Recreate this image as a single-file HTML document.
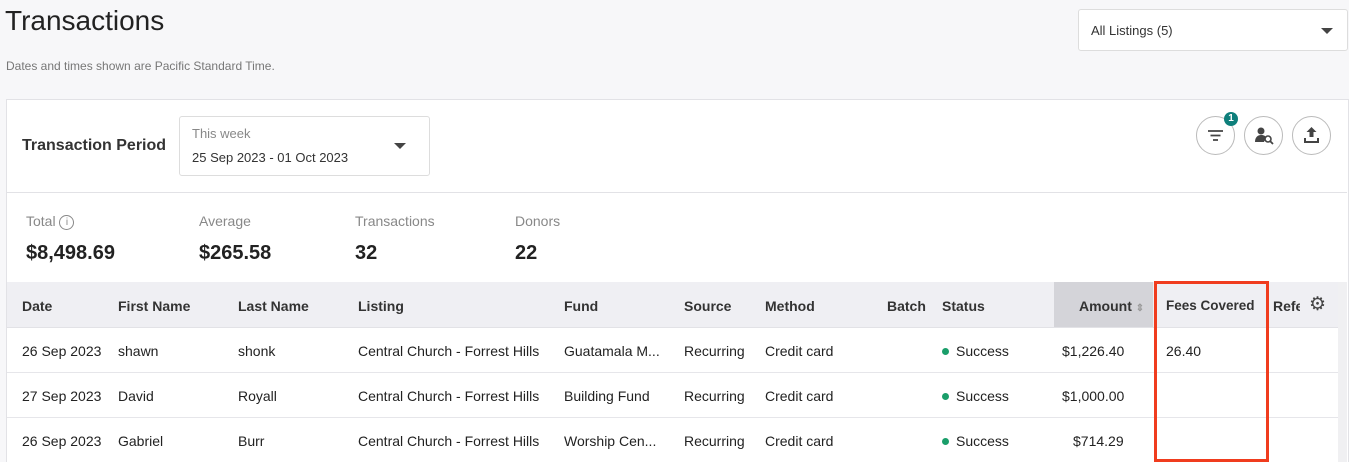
<!DOCTYPE html>
<html><head><style>
html,body{margin:0;width:1349px;height:462px;overflow:hidden}
body{background:#f7f7f9;font-family:"Liberation Sans",sans-serif;color:#222;position:relative}
.a{position:absolute;white-space:nowrap}
.card{position:absolute;left:6px;top:99px;width:1341px;height:370px;background:#fff;border:1px solid #e2e2e6}
.th{font-size:14px;font-weight:bold;color:#333;top:298px}
.td{font-size:14px;color:#222}
.ic{position:absolute;width:37px;height:37px;border:1px solid #bbb;border-radius:50%;background:#fff;top:116px}
.dot{display:inline-block;width:7px;height:7px;border-radius:50%;background:#1a9e6a;margin-right:7px;vertical-align:1px}
</style></head><body>
<div class="a" style="left:5px;top:5px;font-size:28px;color:#222">Transactions</div>
<div class="a" style="left:6px;top:59px;font-size:12px;color:#777">Dates and times shown are Pacific Standard Time.</div>
<div class="a" style="left:1078px;top:9px;width:268px;height:40px;background:#fff;border:1px solid #ddd;border-radius:3px"></div>
<div class="a" style="left:1091px;top:23px;font-size:13px;color:#333">All Listings (5)</div>
<div class="a" style="left:1321px;top:28px;width:0;height:0;border-left:6px solid transparent;border-right:6px solid transparent;border-top:6px solid #444"></div>
<div class="card"></div>
<div class="a" style="left:22px;top:137px;font-size:16px;font-weight:bold;color:#333">Transaction Period</div>
<div class="a" style="left:179px;top:116px;width:249px;height:58px;border:1px solid #ddd;border-radius:3px;background:#fff"></div>
<div class="a" style="left:192px;top:126px;font-size:13px;color:#888">This week</div>
<div class="a" style="left:192px;top:150px;font-size:13px;color:#333">25 Sep 2023 - 01 Oct 2023</div>
<div class="a" style="left:394px;top:143px;width:0;height:0;border-left:6px solid transparent;border-right:6px solid transparent;border-top:6px solid #444"></div>
<div class="ic" style="left:1196px"><svg width="37" height="37"><path d="M11 14h15M13.5 18.5h10M16 23h5" stroke="#444" stroke-width="1.8"/></svg></div>
<div class="a" style="left:1224px;top:112px;width:14px;height:14px;border-radius:50%;background:#0e7f7b;color:#fff;font-size:10px;font-weight:bold;text-align:center;line-height:14px">1</div>
<div class="ic" style="left:1244px"><svg width="37" height="37"><circle cx="16" cy="14" r="3.5" fill="#444"/><path d="M10 25c0-5 3-7 6-7s4 1 5 2l-2 5z" fill="#444"/><circle cx="23" cy="22" r="3" fill="none" stroke="#444" stroke-width="1.6"/><path d="M25 24l3 3" stroke="#444" stroke-width="1.8"/></svg></div>
<div class="ic" style="left:1292px"><svg width="37" height="37"><path d="M18.5 10l-5 5h3v5h4v-5h3z" fill="#444"/><path d="M12 21v4h13v-4" fill="none" stroke="#444" stroke-width="2"/></svg></div>
<div class="a" style="left:7px;top:192px;width:1340px;height:1px;background:#e2e2e6"></div>
<div class="a" style="left:26px;top:213px;font-size:14px;color:#888">Total <span style="display:inline-block;width:13px;height:13px;border:1px solid #888;border-radius:50%;font-size:10px;text-align:center;line-height:13px;vertical-align:1px">i</span></div>
<div class="a" style="left:199px;top:213px;font-size:14px;color:#888">Average</div>
<div class="a" style="left:355px;top:213px;font-size:14px;color:#888">Transactions</div>
<div class="a" style="left:515px;top:213px;font-size:14px;color:#888">Donors</div>
<div class="a" style="left:26px;top:242px;font-size:20px;font-weight:bold;color:#222">$8,498.69</div>
<div class="a" style="left:199px;top:242px;font-size:20px;font-weight:bold;color:#222">$265.58</div>
<div class="a" style="left:355px;top:242px;font-size:20px;font-weight:bold;color:#222">32</div>
<div class="a" style="left:515px;top:242px;font-size:20px;font-weight:bold;color:#222">22</div>
<div class="a" style="left:7px;top:282px;width:1340px;height:45px;background:#efeff3;border-bottom:1px solid #e2e2e6"></div>
<div class="a" style="left:1054px;top:282px;width:99px;height:45px;background:#d4d4d9"></div>
<div class="a" style="left:1338px;top:282px;width:9px;height:180px;background:#f0f0f2"></div>
<div class="a th" style="left:22px">Date</div><div class="a th" style="left:118px">First Name</div><div class="a th" style="left:238px">Last Name</div><div class="a th" style="left:358px">Listing</div><div class="a th" style="left:564px">Fund</div><div class="a th" style="left:684px">Source</div><div class="a th" style="left:765px">Method</div><div class="a th" style="left:887px">Batch</div><div class="a th" style="left:942px">Status</div><div class="a th" style="left:1079px">Amount <span style="color:#999;font-size:10px">⇕</span></div><div class="a th" style="left:1166px;font-size:13.5px">Fees Covered</div><div class="a th" style="left:1273px;width:27px;overflow:hidden">Reference</div>
<div class="a" style="left:1309px;top:293px;font-size:19px;color:#444">⚙</div>
<div class="a" style="left:7px;top:372px;width:1331px;height:1px;background:#e6e6ea"></div>
<div class="a" style="left:7px;top:417px;width:1331px;height:1px;background:#e6e6ea"></div>
<div class="a td" style="left:22px;top:343px">26 Sep 2023</div><div class="a td" style="left:118px;top:343px">shawn</div><div class="a td" style="left:238px;top:343px">shonk</div><div class="a td" style="left:358px;top:343px">Central Church - Forrest Hills</div><div class="a td" style="left:564px;top:343px">Guatamala M...</div><div class="a td" style="left:684px;top:343px">Recurring</div><div class="a td" style="left:765px;top:343px">Credit card</div><div class="a td" style="left:942px;top:343px"><span class="dot"></span>Success</div><div class="a td" style="left:1062px;top:343px">$1,226.40</div><div class="a td" style="left:1166px;top:343px">26.40</div>
<div class="a td" style="left:22px;top:388px">27 Sep 2023</div><div class="a td" style="left:118px;top:388px">David</div><div class="a td" style="left:238px;top:388px">Royall</div><div class="a td" style="left:358px;top:388px">Central Church - Forrest Hills</div><div class="a td" style="left:564px;top:388px">Building Fund</div><div class="a td" style="left:684px;top:388px">Recurring</div><div class="a td" style="left:765px;top:388px">Credit card</div><div class="a td" style="left:942px;top:388px"><span class="dot"></span>Success</div><div class="a td" style="left:1062px;top:388px">$1,000.00</div>
<div class="a td" style="left:22px;top:433px">26 Sep 2023</div><div class="a td" style="left:118px;top:433px">Gabriel</div><div class="a td" style="left:238px;top:433px">Burr</div><div class="a td" style="left:358px;top:433px">Central Church - Forrest Hills</div><div class="a td" style="left:564px;top:433px">Worship Cen...</div><div class="a td" style="left:684px;top:433px">Recurring</div><div class="a td" style="left:765px;top:433px">Credit card</div><div class="a td" style="left:942px;top:433px"><span class="dot"></span>Success</div><div class="a td" style="left:1073px;top:433px">$714.29</div>
<div class="a" style="left:1154px;top:281px;width:109px;height:175px;border:3px solid #f03c1e"></div>
</body></html>
